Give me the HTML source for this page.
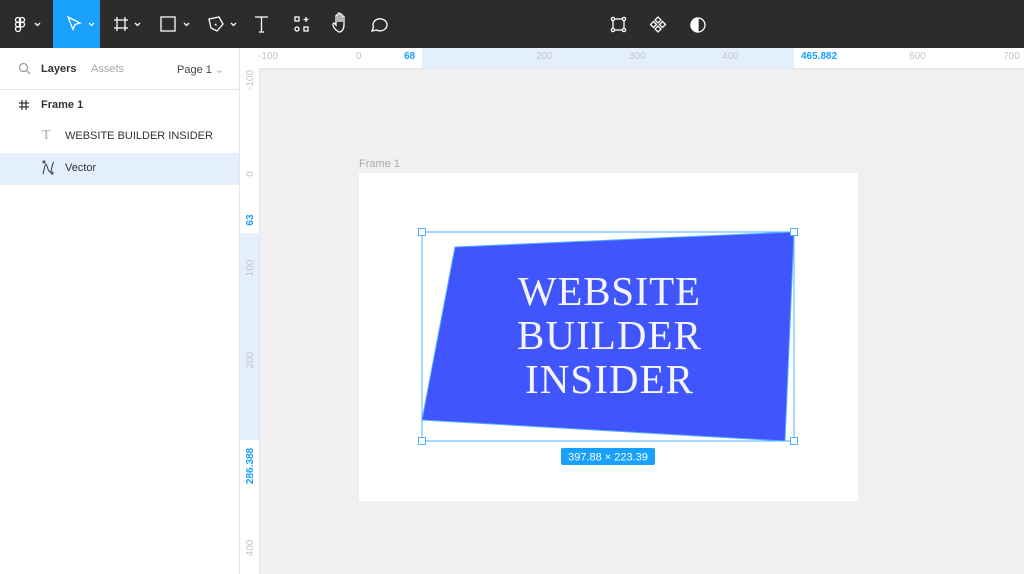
<!DOCTYPE html>
<html><head><style>
body{margin:0;width:1024px;height:574px;overflow:hidden;font-family:"Liberation Sans",sans-serif;background:#f0f0f0;position:relative}
.tb{position:absolute;left:0;top:0;width:1024px;height:48px;background:#2c2c2c}
.lp{position:absolute;left:0;top:48px;width:239px;height:526px;background:#fff;border-right:1px solid #e5e5e5}
.abs{position:absolute}
.hr{position:absolute;left:240px;top:48px;width:784px;height:20px;background:#fff;border-bottom:1px solid #e5e5e5}
.vr{position:absolute;left:240px;top:68px;width:19px;height:506px;background:#fff;border-right:1px solid #e5e5e5}
.t{position:absolute;font-size:10px;color:#c4c4c4}
.b{color:#18a0fb;font-weight:bold}
</style></head><body>
<div class="tb">
<div class="abs" style="left:53px;top:0;width:47px;height:48px;background:#18a0fb"></div>
<svg class="abs" style="left:0;top:0" width="760" height="48" fill="none" stroke="#fff" stroke-width="1.3">
<g><circle cx="18" cy="20" r="2.5"/><circle cx="22" cy="20" r="2.5"/><circle cx="18" cy="24.5" r="2.5"/><circle cx="22" cy="24.5" r="2.5"/><circle cx="18" cy="29" r="2.5"/></g>
<path d="M35 23l2.5 2.5 2.5-2.5"/>
<path d="M68 17l12 6-5 1.5-2 5z"/><path d="M89 23l2.5 2.5 2.5-2.5"/>
<path d="M117 17v14M125 17v14M114 20h14M114 28h14"/><path d="M135 23l2.5 2.5 2.5-2.5"/>
<rect x="161" y="17" width="14" height="14"/><path d="M184 23l2.5 2.5 2.5-2.5"/>
<path d="M209 19l10-2 4 7-6 7-6-3z M215 24l1.5 1.5"/><path d="M231 23l2.5 2.5 2.5-2.5"/>
<path d="M255 17h13M261.5 17v15M259 32h5"/>
<rect x="295" y="17" width="4" height="4"/><path d="M306 17v5M303.5 19.5h5"/><circle cx="297" cy="29" r="2"/><rect x="304" y="27" width="4" height="4"/>
<path d="M336 30c-3-3-4-6-2-7l2 2v-9a1 1 0 012 0v6-8a1 1 0 012 0v8-7a1 1 0 012 0v7-5a1 1 0 012 0v8c0 4-2 7-5 7z"/>
<path d="M372 31l1.5-4a7 6 0 113 3z"/>
<rect x="613" y="19" width="11" height="11"/><g fill="#2c2c2c"><circle cx="613" cy="19" r="1.6"/><circle cx="624" cy="19" r="1.6"/><circle cx="613" cy="30" r="1.6"/><circle cx="624" cy="30" r="1.6"/></g>
<g fill="#2c2c2c"><path d="M658 17l3 3-3 3-3-3z"/><path d="M658 26l3 3-3 3-3-3z"/><path d="M653.5 21.5l3 3-3 3-3-3z"/><path d="M662.5 21.5l3 3-3 3-3-3z"/></g>
<circle cx="698" cy="25" r="7"/><path d="M698 18a7 7 0 000 14z" fill="#fff"/>
</svg>
</div>
<div class="lp">
<svg class="abs" style="left:18px;top:14px" width="14" height="14" fill="none" stroke="#999" stroke-width="1.2"><circle cx="5.5" cy="5.5" r="4"/><path d="M8.5 8.5l3.5 3.5"/></svg>
<div class="abs" style="left:41px;top:15px;font-size:11px;font-weight:bold;color:#333">Layers</div>
<div class="abs" style="left:91px;top:15px;font-size:11px;color:#aaa">Assets</div>
<div class="abs" style="left:177px;top:15px;font-size:11px;color:#444">Page 1 <span style="color:#aaa">⌄</span></div>
<div class="abs" style="left:0;top:41px;width:239px;height:1px;background:#e5e5e5"></div>
<svg class="abs" style="left:18px;top:51px" width="12" height="12" stroke="#333" stroke-width="1.2"><path d="M4 1v10M8 1v10M1 4h10M1 8h10"/></svg>
<div class="abs" style="left:41px;top:51px;font-size:11px;font-weight:bold;color:#333">Frame 1</div>
<div class="abs" style="left:42px;top:80px;font-family:'Liberation Serif';font-size:14px;color:#aaa">T</div>
<div class="abs" style="left:65px;top:82px;font-size:11px;color:#333">WEBSITE BUILDER INSIDER</div>
<div class="abs" style="left:0;top:105px;width:239px;height:32px;background:#e3f0fb"></div>
<svg class="abs" style="left:42px;top:112px" width="14" height="16" fill="none" stroke="#333" stroke-width="1"><path d="M1 14c1-4 2-10 3-10s2 8 4 8 2-10 4-10"/><circle cx="2" cy="2" r="1"/><circle cx="10" cy="13" r="1"/></svg>
<div class="abs" style="left:65px;top:114px;font-size:11px;color:#333">Vector</div>
</div>
<div class="hr">
<div class="abs" style="left:182px;top:0;width:372px;height:20px;background:#e3f0fb"></div>
<span class="t" style="left:18px;top:3px">-100</span><span class="t" style="left:116px;top:3px">0</span>
<span class="t b" style="left:164px;top:3px">68</span><span class="t" style="left:296px;top:3px">200</span>
<span class="t" style="left:389px;top:3px">300</span><span class="t" style="left:482px;top:3px">400</span>
<span class="t b" style="left:561px;top:3px">465.882</span><span class="t" style="left:669px;top:3px">600</span>
<span class="t" style="left:763px;top:3px">700</span>
</div>
<div class="vr">
<div class="abs" style="left:0;top:165px;width:19px;height:207px;background:#e3f0fb"></div>
</div>
<svg class="abs" style="left:240px;top:68px" width="19" height="506" font-family="Liberation Sans" font-size="10" fill="#c4c4c4" text-anchor="middle">
<text transform="translate(13,12) rotate(-90)">-100</text>
<text transform="translate(13,106) rotate(-90)">0</text>
<text transform="translate(13,152) rotate(-90)" fill="#18a0fb" font-weight="bold">63</text>
<text transform="translate(13,200) rotate(-90)">100</text>
<text transform="translate(13,292) rotate(-90)">200</text>
<text transform="translate(13,398) rotate(-90)" fill="#18a0fb" font-weight="bold">286.388</text>
<text transform="translate(13,480) rotate(-90)">400</text>
</svg>
<div class="abs" style="left:359px;top:158px;font-size:11px;color:#aaa">Frame 1</div>
<div class="abs" style="left:359px;top:173px;width:499px;height:328px;background:#fff"></div>
<svg class="abs" style="left:0;top:0" width="1024" height="574">
<polygon points="455,247 794,232 785,441 422,420" fill="#4155fd" stroke="#4fb0ff" stroke-width="1"/>
<rect x="422" y="232" width="372" height="209" fill="none" stroke="#4fb0ff" stroke-width="1"/>
<g fill="#fff" stroke="#4fb0ff"><rect x="418.5" y="228.5" width="7" height="7"/><rect x="790.5" y="228.5" width="7" height="7"/><rect x="418.5" y="437.5" width="7" height="7"/><rect x="790.5" y="437.5" width="7" height="7"/></g>
<g font-family="Liberation Serif" font-size="41" fill="#f4f5ff" text-anchor="middle"><text x="609" y="305" textLength="182">WEBSITE</text><text x="609" y="349" textLength="184">BUILDER</text><text x="609" y="393" textLength="168">INSIDER</text></g>
<rect x="561" y="448" width="94" height="17" rx="2" fill="#18a0fb"/>
<text x="608" y="460.5" font-size="11" fill="#fff" text-anchor="middle" font-family="Liberation Sans">397.88 × 223.39</text>
</svg>
</body></html>
